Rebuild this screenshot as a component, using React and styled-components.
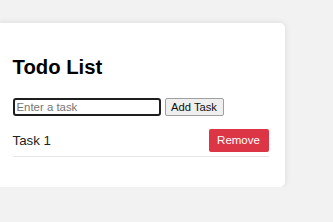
import React, { useState } from 'react'
import styled, { createGlobalStyle } from 'styled-components'

const GlobalStyle = createGlobalStyle`
  body {
    margin: 0;
    background: #f2f2f2;
    font-family: "Liberation Sans", Arial, sans-serif;
  }
`;

const Page = styled.div`
  padding-top: 23px;
`;

const Card = styled.div`
  box-sizing: border-box;
  width: 289px;
  margin-left: -4px;
  padding: 16.5px;
  background: #fff;
  border-radius: 5px;
  box-shadow: 0 0 6px rgba(0, 0, 0, 0.1);
`;

const Title = styled.h2`
  margin: 16.5px 0 18.5px;
  font-size: 20.3px;
  font-weight: bold;
  color: #000;
`;

const Form = styled.div`
  display: flex;
  align-items: center;
  gap: 4px;
`;

const TaskInput = styled.input`
  box-sizing: border-box;
  width: 148px;
  height: 18px;
  padding: 0 2px;
  font-family: inherit;
  font-size: 11.4px;
  border: 2px solid #1e1e1e;
  border-radius: 3px;
  outline: none;
  &::placeholder {
    color: #757575;
  }
`;

const AddButton = styled.button`
  box-sizing: border-box;
  width: 59px;
  height: 18px;
  padding: 0;
  font-family: inherit;
  font-size: 11.2px;
  color: #111;
  background: #efefef;
  border: 1px solid #a0a0a0;
  border-radius: 2px;
`;

const List = styled.ul`
  list-style: none;
  margin: 13px 0 14px;
  padding: 0;
`;

const Row = styled.li`
  display: flex;
  align-items: center;
  justify-content: space-between;
  padding-bottom: 4px;
  border-bottom: 1px solid #e6e6e6;
  font-size: 13.3px;
  color: #222;
`;

const RemoveButton = styled.button`
  width: 60px;
  height: 23px;
  padding: 0;
  font-family: inherit;
  font-size: 11.5px;
  color: #fff;
  background: #dc3545;
  border: none;
  border-radius: 2px;
`;

export default function App () {
  const [tasks] = useState(['Task 1'])
  return (
    <Page>
      <GlobalStyle />
      <Card>
        <Title>Todo List</Title>
        <Form>
          <TaskInput placeholder='Enter a task' />
          <AddButton>Add Task</AddButton>
        </Form>
        <List>
          {tasks.map(t => (
            <Row key={t}>
              <span>{t}</span>
              <RemoveButton>Remove</RemoveButton>
            </Row>
          ))}
        </List>
      </Card>
    </Page>
  )
}
